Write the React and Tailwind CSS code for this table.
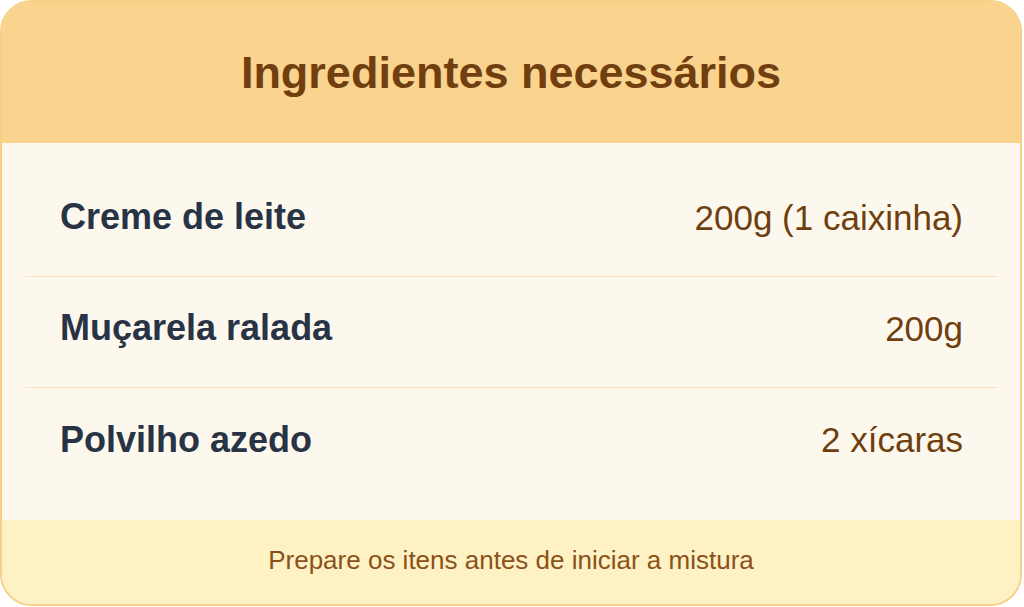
import React from "react";

export default function App() {
  const items = [
    { name: "Creme de leite", amount: "200g (1 caixinha)" },
    { name: "Muçarela ralada", amount: "200g" },
    { name: "Polvilho azedo", amount: "2 xícaras" },
  ];

  return (
    <div
      className="w-[1024px] h-[607px] bg-white"
      style={{ fontFamily: '"Liberation Sans", Arial, sans-serif' }}
    >
      <div className="w-[1022px] h-[606px] flex flex-col overflow-hidden rounded-[32px] border-2 border-[#f8cf85] bg-[#fdf8ee]">
        {/* Header */}
        <div className="h-[141px] shrink-0 flex items-center justify-center bg-[#fad38e]">
          <h1 className="text-[45px] font-bold text-[#713f0f] leading-none">
            Ingredientes necessários
          </h1>
        </div>

        {/* Ingredient rows */}
        <div className="flex-1 pl-[23px] pr-[22px] pt-[23px]">
          {items.map((item, i) => (
            <div
              key={i}
              className={
                "h-[111px] flex items-center justify-between pl-[35px] pr-[35px] " +
                (i < items.length - 1 ? "border-b border-[#f9e3bd]" : "")
              }
            >
              <span className="text-[36px] font-bold text-[#283445] leading-none -mt-2">
                {item.name}
              </span>
              <span className="text-[35px] text-[#6f3f10] leading-none -mt-2">
                {item.amount}
              </span>
            </div>
          ))}
        </div>

        {/* Footer */}
        <div className="h-[84px] shrink-0 flex items-center justify-center bg-[#fef1c4]">
          <p className="text-[26px] text-[#8a5219] leading-none -mt-1">
            Prepare os itens antes de iniciar a mistura
          </p>
        </div>
      </div>
    </div>
  );
}
